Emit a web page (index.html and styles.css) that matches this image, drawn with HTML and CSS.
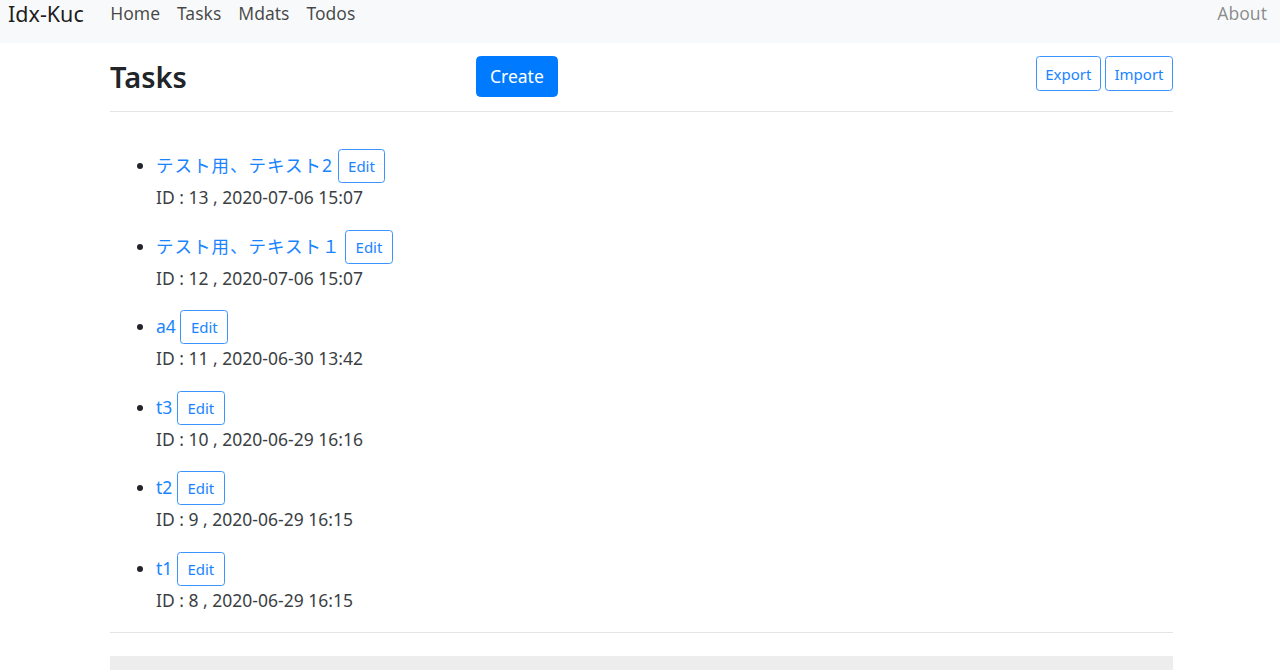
FILE: index.html
```html
<!DOCTYPE html>
<html lang="ja">
<head>
<meta charset="utf-8">
<title>Tasks - Idx-Kuc</title>
<link rel="stylesheet" href="styles.css">
</head>
<body>
<nav class="navbar">
  <a class="brand" href="#">Idx-Kuc</a>
  <ul class="nav">
    <li><a class="nav-link" href="#">Home</a></li>
    <li><a class="nav-link" href="#">Tasks</a></li>
    <li><a class="nav-link" href="#">Mdats</a></li>
    <li><a class="nav-link" href="#">Todos</a></li>
  </ul>
  <a class="nav-link about" href="#">About</a>
</nav>
<main class="container">
  <div class="page-head">
    <h2 class="title">Tasks</h2>
    <a class="btn btn-primary create" href="#">Create</a>
    <div class="head-actions">
      <a class="btn btn-outline btn-sm" href="#">Export</a>
      <a class="btn btn-outline btn-sm" href="#">Import</a>
    </div>
  </div>
  <hr class="rule">
  <ul class="task-list">
    <li class="task">
      <div class="task-title"><a class="task-link jp" href="#">テスト用、テキスト2</a> <a class="btn btn-outline btn-sm" href="#">Edit</a></div>
      <div class="task-meta">ID : 13 , 2020-07-06 15:07</div>
    </li>
    <li class="task">
      <div class="task-title"><a class="task-link jp" href="#">テスト用、テキスト１</a> <a class="btn btn-outline btn-sm" href="#">Edit</a></div>
      <div class="task-meta">ID : 12 , 2020-07-06 15:07</div>
    </li>
    <li class="task">
      <div class="task-title"><a class="task-link" href="#">a4</a> <a class="btn btn-outline btn-sm" href="#">Edit</a></div>
      <div class="task-meta">ID : 11 , 2020-06-30 13:42</div>
    </li>
    <li class="task">
      <div class="task-title"><a class="task-link" href="#">t3</a> <a class="btn btn-outline btn-sm" href="#">Edit</a></div>
      <div class="task-meta">ID : 10 , 2020-06-29 16:16</div>
    </li>
    <li class="task">
      <div class="task-title"><a class="task-link" href="#">t2</a> <a class="btn btn-outline btn-sm" href="#">Edit</a></div>
      <div class="task-meta">ID : 9 , 2020-06-29 16:15</div>
    </li>
    <li class="task">
      <div class="task-title"><a class="task-link" href="#">t1</a> <a class="btn btn-outline btn-sm" href="#">Edit</a></div>
      <div class="task-meta">ID : 8 , 2020-06-29 16:15</div>
    </li>
  </ul>
  <hr class="rule bottom-rule">
  <div class="footer-box"></div>
</main>
</body>
</html>
```
FILE: styles.css
```css
* { box-sizing: border-box; }
html, body { margin: 0; padding: 0; }
body {
  font-family: "Noto Sans", "Noto Sans CJK JP", sans-serif;
  font-size: 17.5px;
  line-height: 1.5;
  color: #212529;
  background: #fff;
  overflow: hidden;
}
a { text-decoration: none; }

.navbar {
  display: flex;
  align-items: flex-start;
  height: 43px;
  padding: 0 4px 0 8px;
  background: #f8f9fa;
}
.brand {
  font-size: 21.5px;
  line-height: 27px;
  color: rgba(0,0,0,.9);
  margin-right: 18px;
}
.nav {
  display: flex;
  list-style: none;
  margin: 0;
  padding: 0;
  flex: 1;
}
.nav-link {
  display: block;
  padding: 0 8.5px;
  line-height: 27px;
  color: rgba(0,0,0,.72);
}
.nav-link.about { color: rgba(0,0,0,.45); padding-right: 9px; }

.container {
  width: 1063px;
  margin: 0 0 0 110px;
}
.page-head {
  display: flex;
  align-items: flex-start;
  padding-top: 13px;
}
.title {
  margin: 0;
  width: 366px;
  font-size: 29px;
  font-weight: 600;
  line-height: 41px;
  color: #212529;
}
.head-actions {
  margin-left: auto;
  display: flex;
  gap: 4px;
}
.btn {
  display: inline-block;
  border: 1px solid #007bff;
  border-radius: 4.5px;
  font-size: 17.5px;
  line-height: 27px;
  padding: 6px 13px;
  text-align: center;
}
.btn-primary {
  background: #007bff;
  color: #fff;
}
.btn-outline {
  background: #fff;
  color: #1a84ff;
  border-color: #3a93ff;
}
.btn-sm {
  font-size: 15px;
  line-height: 24px;
  padding: 4.5px 8.5px;
  border-radius: 3.5px;
}
.rule {
  border: 0;
  border-top: 1px solid #e5e5e5;
  margin: 14px 0 0;
}
.task-list {
  margin: 37px 0 0;
  padding-left: 46px;
}
.task {
  margin-bottom: 18.5px;
}
.task-title {
  line-height: 27px;
}
.task-link {
  color: #1a84ff;
}
.task-link.jp { letter-spacing: 1px; }
.task-title .btn-sm {
  padding: 4px 9.5px;
  vertical-align: baseline;
}
.task-meta {
  line-height: 27px;
  padding-top: 1px;
  color: #3b3f44;
}
.bottom-rule { margin-top: 0; }
.footer-box {
  margin-top: 23px;
  height: 14px;
  background: #ededed;
}
```
